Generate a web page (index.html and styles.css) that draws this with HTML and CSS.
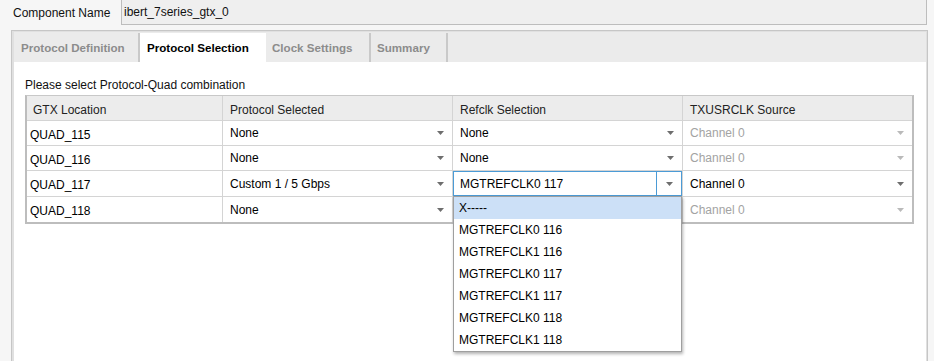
FILE: index.html
```html
<!DOCTYPE html>
<html lang="en">
  <head>
    <meta charset="UTF-8" />
    <title>IBERT 7 Series GTX - Protocol Selection</title>
    <link rel="stylesheet" href="styles.css">
  </head>
  <body>
    <!-- Component name -->
    <div class="top-row">
      <span class="top-label">Component Name</span>
      <div class="name-box">ibert_7series_gtx_0</div>
    </div>

    <div class="panel">
      <div class="tabs">
        <div class="tab tab-def">Protocol Definition</div>
        <div class="tab tab-sel active">Protocol Selection</div>
        <div class="tab tab-clk">Clock Settings</div>
        <div class="tab tab-sum">Summary</div>
      </div>

      <div class="content">
        <p class="hint">Please select Protocol-Quad combination</p>

        <div class="quad-table">
          <div class="cell head loc">GTX Location</div>
          <div class="cell head">Protocol Selected</div>
          <div class="cell head">Refclk Selection</div>
          <div class="cell head">TXUSRCLK Source</div>

          <div class="cell loc">QUAD_115</div>
          <div class="cell combo">None<svg class="arrow" viewBox="0 0 7 4"><polygon points="0,0 7,0 3.5,4"/></svg></div>
          <div class="cell combo">None<svg class="arrow" viewBox="0 0 7 4"><polygon points="0,0 7,0 3.5,4"/></svg></div>
          <div class="cell combo disabled">Channel 0<svg class="arrow" viewBox="0 0 7 4"><polygon points="0,0 7,0 3.5,4"/></svg></div>

          <div class="cell loc">QUAD_116</div>
          <div class="cell combo">None<svg class="arrow" viewBox="0 0 7 4"><polygon points="0,0 7,0 3.5,4"/></svg></div>
          <div class="cell combo">None<svg class="arrow" viewBox="0 0 7 4"><polygon points="0,0 7,0 3.5,4"/></svg></div>
          <div class="cell combo disabled">Channel 0<svg class="arrow" viewBox="0 0 7 4"><polygon points="0,0 7,0 3.5,4"/></svg></div>

          <div class="cell loc">QUAD_117</div>
          <div class="cell combo">Custom 1 / 5 Gbps<svg class="arrow" viewBox="0 0 7 4"><polygon points="0,0 7,0 3.5,4"/></svg></div>
          <div class="cell editing">
            <div class="combo-focus">
              <span class="combo-text">MGTREFCLK0 117</span>
              <span class="combo-btn"><svg class="arrow" viewBox="0 0 7 4"><polygon points="0,0 7,0 3.5,4"/></svg></span>
            </div>
            <ul class="popup">
              <li class="selected">X-----</li>
              <li>MGTREFCLK0 116</li>
              <li>MGTREFCLK1 116</li>
              <li>MGTREFCLK0 117</li>
              <li>MGTREFCLK1 117</li>
              <li>MGTREFCLK0 118</li>
              <li>MGTREFCLK1 118</li>
            </ul>
          </div>
          <div class="cell combo">Channel 0<svg class="arrow" viewBox="0 0 7 4"><polygon points="0,0 7,0 3.5,4"/></svg></div>

          <div class="cell loc">QUAD_118</div>
          <div class="cell combo">None<svg class="arrow" viewBox="0 0 7 4"><polygon points="0,0 7,0 3.5,4"/></svg></div>
          <div class="cell combo"></div>
          <div class="cell combo disabled">Channel 0<svg class="arrow" viewBox="0 0 7 4"><polygon points="0,0 7,0 3.5,4"/></svg></div>
        </div>
      </div>
    </div>
  </body>
</html>
```

FILE: styles.css
```css
* {
  margin: 0;
  padding: 0;
  box-sizing: border-box;
}

body {
  background: #f6f6f6;
  font-family: "Liberation Sans", Arial, sans-serif;
  font-size: 12px;
  color: #000;
  height: 361px;
  overflow: hidden;
}

/* Component name row */
.top-row {
  display: flex;
  align-items: stretch;
  height: 25px;
  padding-right: 7px;
}

.top-label {
  width: 121px;
  padding-left: 13px;
  display: flex;
  align-items: center;
  color: #111;
}

.name-box {
  flex: 1;
  background: #efefef;
  border: 1px solid #bdbdbd;
  border-top: none;
  padding-left: 2px;
  display: flex;
  align-items: center;
  color: #111;
}

/* Tab panel */
.panel {
  margin: 5px 6px 0 11px;
  border: 1px solid #c6c6c6;
  padding: 1px 1px 0 2px;
  background: #e0e0e0;
  height: 340px;
  display: flex;
  flex-direction: column;
}

.tabs {
  display: flex;
  height: 30px;
  padding-top: 1px;
  background: #ebebeb;
}

.tab {
  display: flex;
  align-items: center;
  font-size: 11.6px;
  font-weight: bold;
  color: #8c8c8c;
  border-right: 2px solid #c9c9c9;
}

.tab-def {
  width: 126px;
  padding-left: 7px;
}

.tab-sel {
  width: 126px;
  padding-left: 7px;
}

.tab-clk {
  width: 105px;
  padding-left: 6px;
}

.tab-sum {
  width: 77px;
  padding-left: 6px;
}

.tab.active {
  background: #fff;
  color: #000;
  border-right: none;
}

.content {
  flex: 1;
  background: #fff;
  padding: 16px 0 0 11px;
}

.hint {
  line-height: 14px;
  margin-bottom: 3px;
  color: #111;
}

/* Quad table */
.quad-table {
  width: 889px;
  display: grid;
  grid-template-columns: 195px 229px 229px 229px;
  grid-template-rows: 24px 24px 24px 25px 25px;
  gap: 1px;
  background: #d4d4d4;
  border: 2px solid #bdbdbd;
  border-top: 1px solid #c8c8c8;
}

.cell {
  background: #fff;
  display: flex;
  align-items: center;
  padding-left: 7px;
}

.cell.head {
  background: #ececec;
  color: #222;
  padding-top: 3px;
}

.cell.loc {
  padding-left: 3px;
  padding-top: 3px;
}

.cell.head.loc {
  padding-left: 6px;
  padding-top: 3px;
}

.combo {
  justify-content: space-between;
  padding-right: 8px;
}

.arrow {
  width: 7px;
  height: 4px;
  fill: #6e6e6e;
}

.disabled {
  color: #a3a3a3;
}

.disabled .arrow {
  fill: #bababa;
}

/* Open combobox */
.editing {
  position: relative;
  padding: 0;
}

.combo-focus {
  display: flex;
  width: 100%;
  height: 100%;
  border: 1px solid #4b9bd6;
}

.combo-text {
  flex: 1;
  padding-left: 6px;
  display: flex;
  align-items: center;
}

.combo-btn {
  width: 25px;
  border-left: 1px solid #4b9bd6;
  display: flex;
  align-items: center;
  justify-content: center;
}

.popup {
  position: absolute;
  top: 100%;
  left: 0;
  width: 229px;
  list-style: none;
  background: #fff;
  border: 1px solid #9f9f9f;
  box-shadow: 1px 2px 3px rgba(0, 0, 0, 0.3);
  z-index: 10;
}

.popup li {
  height: 22px;
  line-height: 22px;
  padding-left: 5px;
  color: #000;
}

.popup li.selected {
  background: #cce0f7;
}
```
